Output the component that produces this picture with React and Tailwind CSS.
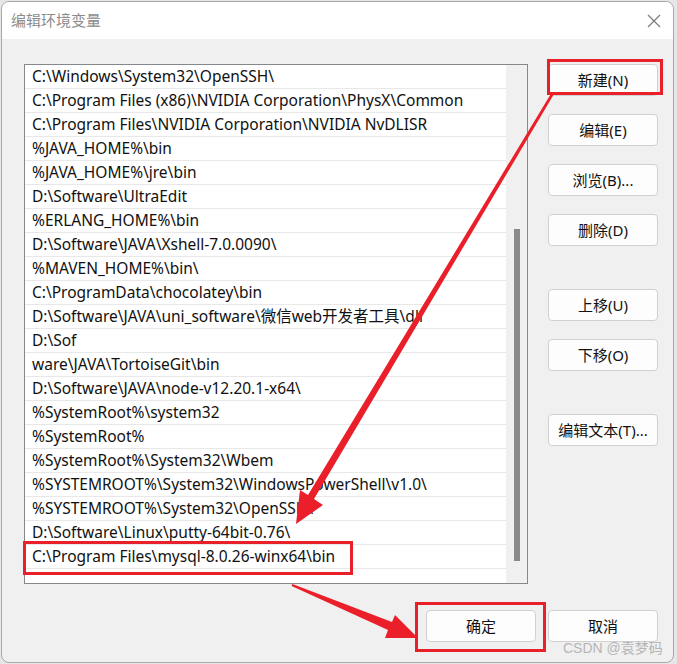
import React from "react";

const paths = [
  "C:\\Windows\\System32\\OpenSSH\\",
  "C:\\Program Files (x86)\\NVIDIA Corporation\\PhysX\\Common",
  "C:\\Program Files\\NVIDIA Corporation\\NVIDIA NvDLISR",
  "%JAVA_HOME%\\bin",
  "%JAVA_HOME%\\jre\\bin",
  "D:\\Software\\UltraEdit",
  "%ERLANG_HOME%\\bin",
  "D:\\Software\\JAVA\\Xshell-7.0.0090\\",
  "%MAVEN_HOME%\\bin\\",
  "C:\\ProgramData\\chocolatey\\bin",
  "D:\\Software\\JAVA\\uni_software\\微信web开发者工具\\dll",
  "D:\\Sof",
  "ware\\JAVA\\TortoiseGit\\bin",
  "D:\\Software\\JAVA\\node-v12.20.1-x64\\",
  "%SystemRoot%\\system32",
  "%SystemRoot%",
  "%SystemRoot%\\System32\\Wbem",
  "%SYSTEMROOT%\\System32\\WindowsPowerShell\\v1.0\\",
  "%SYSTEMROOT%\\System32\\OpenSSH\\",
  "D:\\Software\\Linux\\putty-64bit-0.76\\",
  "C:\\Program Files\\mysql-8.0.26-winx64\\bin",
];

function Btn({ children, className = "" }) {
  return (
    <button
      className={`h-[32px] w-[110px] rounded-[4px] border border-[#d0d0d0] bg-[#fdfdfd] text-[15px] text-[#111] ${className}`}
    >
      {children}
    </button>
  );
}

function Arrows() {
  return (
    <svg
      className="pointer-events-none absolute left-0 top-0"
      width="677"
      height="664"
      viewBox="0 0 677 664"
    >
      <polygon
        fill="#ea1f29"
        points="554,94 314,499 323,505 296,524 300,490 308,495 552,92"
      />
      <polygon
        fill="#ea1f29"
        points="291.6,586 388,630 385,638 418,638 395,615 392,622 292.4,584"
      />
    </svg>
  );
}

export default function App() {
  return (
    <div
      className="relative h-[664px] w-[677px] overflow-hidden bg-[#e6e6e6]"
      style={{ fontFamily: '"Noto Sans", "Noto Sans CJK SC", sans-serif' }}
    >
      <div className="ml-[1px] mt-[1px] flex h-[662px] w-[673px] flex-col overflow-hidden rounded-[8px] border border-[#a9a9a9] bg-[#f0f0f0]">
        {/* title bar */}
        <div className="flex h-[37px] shrink-0 items-center justify-between bg-white pl-[9px] pr-[12px]">
          <span className="text-[15px] text-[#8c8c8c]">编辑环境变量</span>
          <svg width="14" height="14" viewBox="0 0 14 14">
            <path d="M1 1 L13 13 M13 1 L1 13" stroke="#7a7a7a" strokeWidth="1.2" />
          </svg>
        </div>

        {/* body */}
        <div className="flex flex-1 flex-col">
          <div className="flex pl-[22px] pt-[25px]">
            <div className="flex h-[520px] w-[504px] border border-[#84878c] bg-white">
              <div className="flex w-[481px] flex-col">
                {paths.map((p) => (
                  <div
                    key={p}
                    className="flex h-[24px] shrink-0 items-center border-b border-[#e8e8e8] pl-[7px] text-[15.5px] leading-none whitespace-nowrap text-[#111]"
                  >
                    {p}
                  </div>
                ))}
              </div>
              <div className="flex w-[21px] justify-center bg-[#f0f0f0] pt-[164px]">
                <div className="h-[332px] w-[6px] bg-[#8a8a8a]" />
              </div>
            </div>

            <div className="ml-[20px] flex flex-col">
              <Btn>新建(N)</Btn>
              <Btn className="mt-[18px]">编辑(E)</Btn>
              <Btn className="mt-[18px]">浏览(B)...</Btn>
              <Btn className="mt-[18px]">删除(D)</Btn>
              <Btn className="mt-[43px]">上移(U)</Btn>
              <Btn className="mt-[18px]">下移(O)</Btn>
              <Btn className="mt-[43px]">编辑文本(T)...</Btn>
            </div>
          </div>

          <div className="flex justify-end gap-[12px] pr-[15px] pt-[26px]">
            <Btn>确定</Btn>
            <Btn>取消</Btn>
          </div>
        </div>
      </div>

      {/* red highlight boxes */}
      <div className="absolute left-[547px] top-[59px] h-[36px] w-[116px] border-[3px] border-[#e8202a]" />
      <div className="absolute left-[23px] top-[541px] h-[34px] w-[330px] border-[3px] border-[#e8202a]" />
      <div className="absolute left-[415px] top-[602px] h-[50px] w-[131px] border-[3px] border-[#e8202a]" />

      <Arrows />

      <div
        className="absolute left-[563px] top-[638px] text-[14px] text-[#b5b5b5]"
        style={{ fontFamily: '"Liberation Sans", "Noto Sans CJK SC", sans-serif' }}
      >
        CSDN @袁梦码
      </div>
    </div>
  );
}
